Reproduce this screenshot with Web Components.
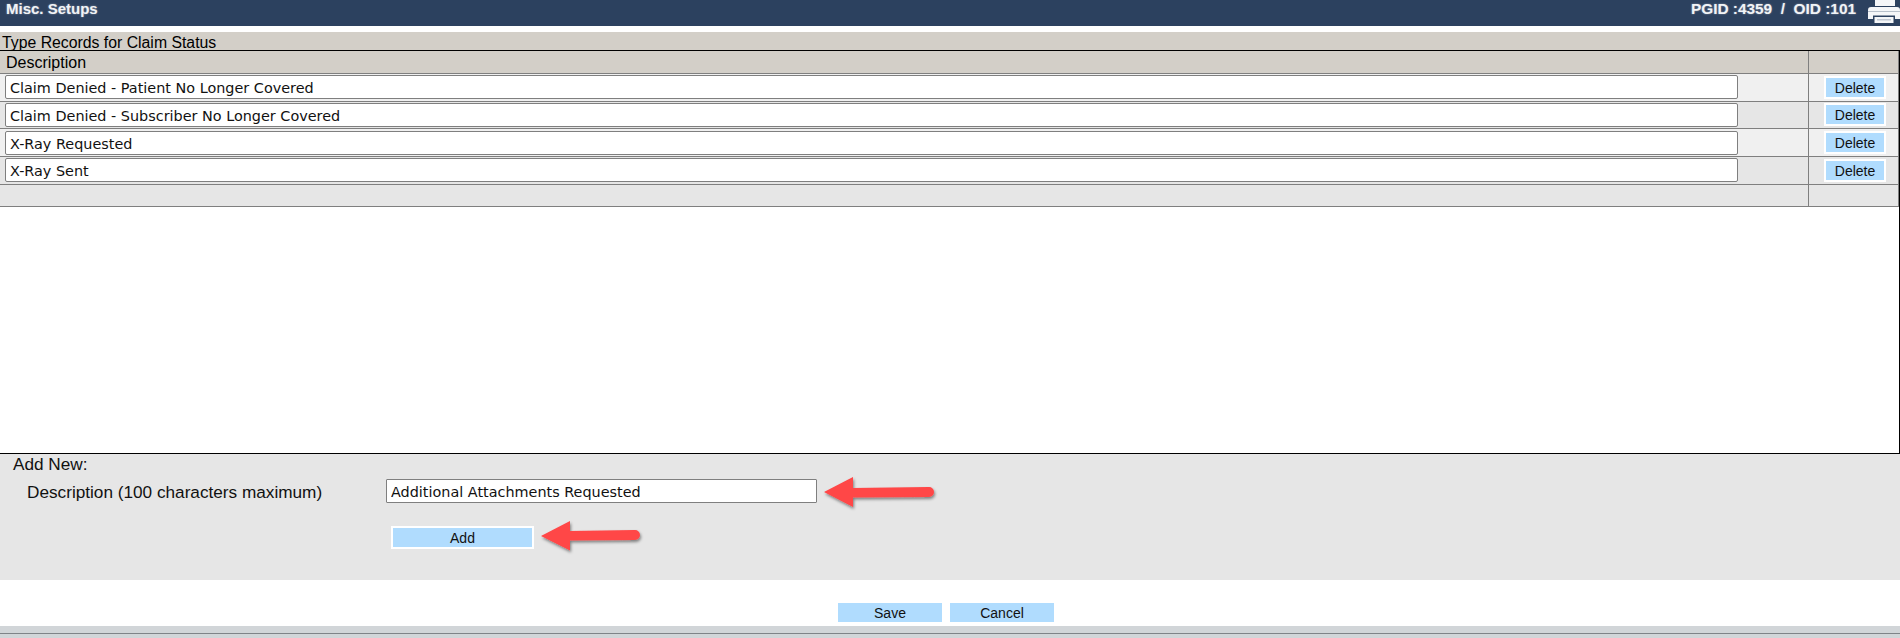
<!DOCTYPE html>
<html><head><meta charset="utf-8">
<style>
html,body{margin:0;padding:0;background:#fff;height:638px;overflow:hidden;font-family:"Liberation Sans",Arial,sans-serif;color:#111}
main{display:flex;flex-direction:column;height:638px}
</style></head><body>
<main>
<app-header title-text="Misc. Setups" info="PGID :4359  /  OID :101"></app-header>
<record-panel caption="Type Records for Claim Status" column="Description">
  <record-row value="Claim Denied - Patient No Longer Covered" h="28" bg="#f0f0f0" it="1" bt="2"></record-row>
  <record-row value="Claim Denied - Subscriber No Longer Covered" h="27" bg="#e6e6e6" it="1" bt="1"></record-row>
  <record-row value="X-Ray Requested" h="28" bg="#f0f0f0" it="2" bt="2"></record-row>
  <record-row value="X-Ray Sent" h="28" bg="#e6e6e6" it="1" bt="2"></record-row>
</record-panel>
<add-form></add-form>
<action-bar></action-bar>
<page-footer></page-footer>
</main>
<script>
function def(name, html){
  customElements.define(name, class extends HTMLElement{
    connectedCallback(){
      if(this.shadowRoot) return;
      const s=this.attachShadow({mode:'open'});
      s.innerHTML=html(this);
    }
  });
}
def('flat-button',el=>`<style>
:host{display:flex;box-sizing:border-box;align-items:center;justify-content:center;background:#b0dcfe;font:14px "Liberation Sans",Arial,sans-serif;color:#111;cursor:pointer}
:host([framed]){border:2px solid #fff}
</style><slot></slot>`);
def('app-header',el=>`<style>
:host{display:flex;flex:none;height:26px;background:#2c415f;color:#f1f3f6;align-items:flex-start;font:bold 15px "Liberation Sans",Arial,sans-serif;text-shadow:0 0 2px rgba(255,255,255,.45)}
.t{padding:0 0 0 6px;flex:1}
.i{white-space:pre;margin-right:12px;font-size:15.4px}
svg{display:block;flex:none}
</style><div class="t">${el.getAttribute('title-text')}</div><div class="i">${el.getAttribute('info')}</div>
<svg width="32" height="26" viewBox="0 0 32 26" fill="#f4f6f8"><path d="M7 0h20v6h-20z"/><path d="M3 7h26a3 3 0 0 1 3 3v9h-5v-3.500h-22v3.500h-5v-9a3 3 0 0 1 3-3z"/><path d="M6.500 17h19v6h-19z"/><path d="M9 19h14v1.500h-14z" fill="#2c415f" opacity=".25"/><path d="M0 11h32v1h-32z" fill="#2c415f" opacity=".3"/></svg>`);
def('record-panel',el=>`<style>
:host{display:block;flex:none;margin-top:6px}
.cap{height:18px;background:#d3cfc8;font:15.8px/21px "Liberation Sans",Arial,sans-serif;padding-left:2px;color:#000;white-space:nowrap;overflow:hidden}
.box{height:404px;box-sizing:border-box;border-top:1px solid #000;border-bottom:1px solid #000;border-right:1px solid #000;display:flex;flex-direction:column;background:#fff}
.head,.foot{display:grid;grid-template-columns:1fr 91px;flex:none;border-bottom:1px solid #7f7f7f;box-sizing:border-box}
.head{height:23px;background:#d3cfc8;font:16px/23px "Liberation Sans",Arial,sans-serif;color:#000}
.head div:first-child{padding-left:6px}
.foot{height:22px;background:#e6e6e6}
.head div+div,.foot div+div{border-left:1px solid #7f7f7f;border-right:1px solid #7f7f7f}
</style><div class="cap">${el.getAttribute('caption')}</div>
<div class="box"><div class="head"><div>${el.getAttribute('column')}</div><div></div></div><slot></slot><div class="foot"><div></div><div></div></div></div>`);
def('record-row',el=>`<style>
:host{display:grid;grid-template-columns:1fr 91px;height:${el.getAttribute('h')}px;box-sizing:border-box;background:${el.getAttribute('bg')};border-bottom:1px solid #7f7f7f;flex:none}
.l{display:flex;align-items:flex-start;padding:${el.getAttribute('it')}px 0 0 5px}
.r{border-left:1px solid #7f7f7f;border-right:1px solid #7f7f7f;display:flex;align-items:flex-start;padding:${el.getAttribute('bt')}px 0 0 15px;box-sizing:border-box}
input{box-sizing:border-box;width:1733px;height:24px;border:1px solid #7f7f7f;border-radius:2px;background:#fff;padding:1px 4px 0;margin:0;font:14.4px "DejaVu Sans",Verdana,sans-serif;color:#111;outline:none}
flat-button{width:62px;height:23px}
</style><div class="l"><input value="${el.getAttribute('value')}"></div><div class="r"><flat-button framed>Delete</flat-button></div>`);
def('add-form',el=>`<style>
:host{display:block;flex:none;height:126px;background:#e6e6e6;box-sizing:border-box;position:relative;font:17.2px "Liberation Sans",Arial,sans-serif;color:#111}
.a{padding:1px 0 0 13px;line-height:18px}
.d{display:flex;align-items:flex-start;padding:6px 0 0 27px}
.d label{width:359px;line-height:26px;flex:none}
input{box-sizing:border-box;width:431px;height:24px;border:1px solid #7f7f7f;border-radius:1px;background:#fff;padding:1px 4px 0;margin:0;font:14.4px "DejaVu Sans",Verdana,sans-serif;color:#111;outline:none}
.b{display:flex;padding:21px 0 0 391px}
flat-button{width:143px;height:23px}
svg{position:absolute;overflow:visible}
</style><div class="a">Add New:</div>
<div class="d"><label>Description (100 characters maximum)</label><input value="Additional Attachments Requested"></div>
<div class="b"><flat-button framed>Add</flat-button></div>
<svg style="left:824px;top:23px" width="110" height="30" viewBox="0 0 110 30"><defs><filter id="f" x="-20%" y="-30%" width="150%" height="170%"><feDropShadow dx="1" dy="2" stdDeviation="1.500" flood-color="#000" flood-opacity=".45"/></filter></defs><path d="M0 15L29 0V11L105 10a5 5 0 0 1 0 10L29 20.500V30z" fill="#ff4646" filter="url(#f)"/></svg>
<svg style="left:541px;top:67px" width="99" height="30" viewBox="0 0 99 30"><defs><filter id="g" x="-20%" y="-30%" width="150%" height="170%"><feDropShadow dx="1" dy="2" stdDeviation="1.500" flood-color="#000" flood-opacity=".45"/></filter></defs><path d="M0 15L29 0V10L94 9a5 5 0 0 1 0 10L29 19.500V29.500z" fill="#ff4646" filter="url(#g)"/></svg>`);
def('action-bar',el=>`<style>
:host{display:flex;flex:none;height:46px;box-sizing:border-box;padding:23px 0 0 838px;gap:8px;align-items:flex-start}
flat-button{width:104px;height:19px}
</style><flat-button>Save</flat-button><flat-button>Cancel</flat-button>`);
def('page-footer',el=>`<style>
:host{display:block;flex:1;background:#d1d5d8}
div{height:7px;border-bottom:1px solid #7f8387}
</style><div></div>`);
</script>
</body></html>
